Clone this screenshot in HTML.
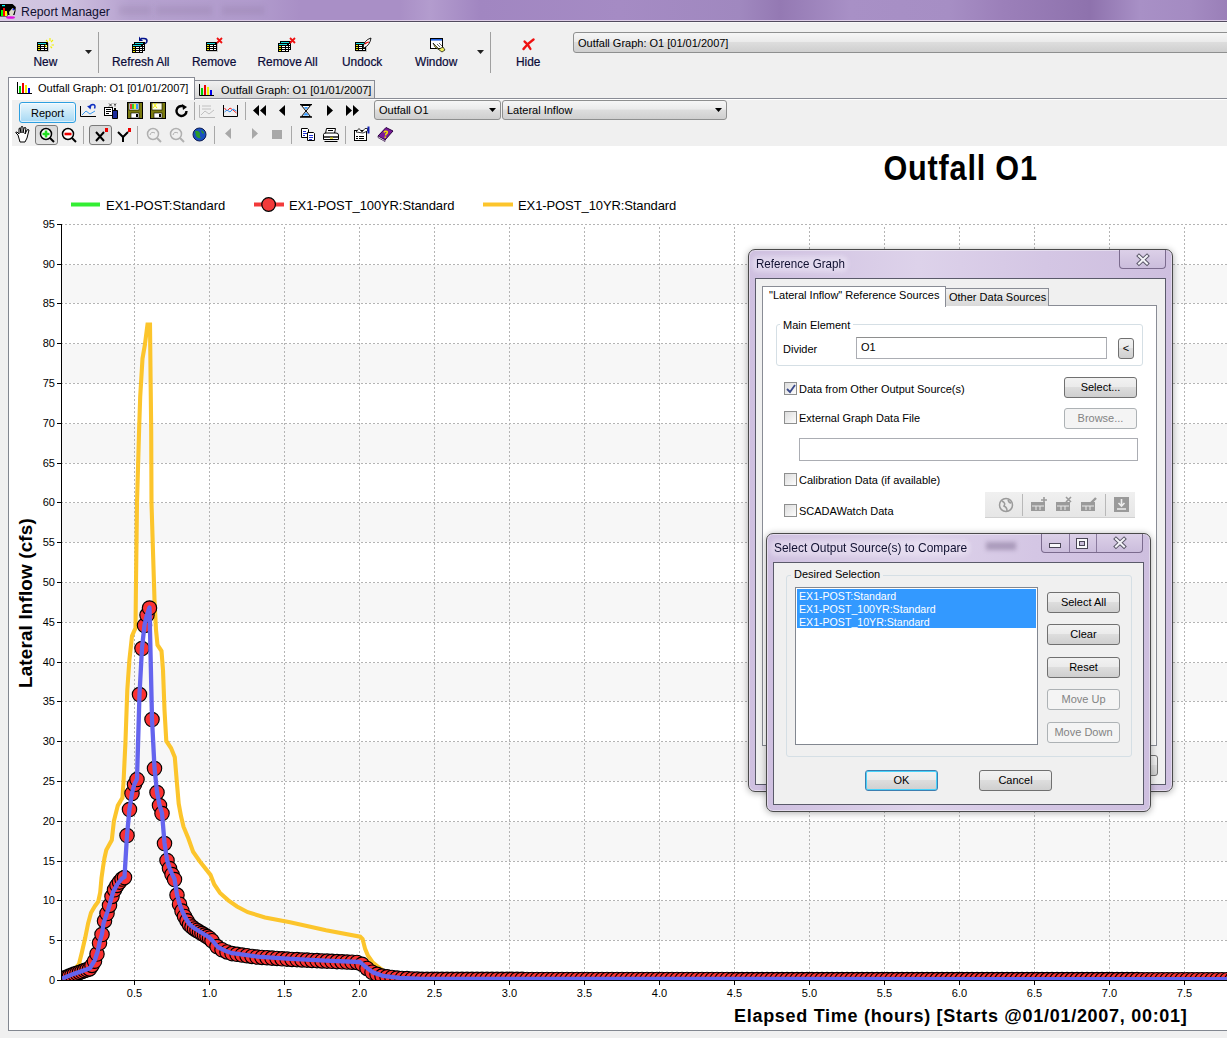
<!DOCTYPE html><html><head><meta charset="utf-8"><style>
*{margin:0;padding:0;box-sizing:border-box}
html,body{width:1227px;height:1038px;overflow:hidden;background:#f0f0f0;font-family:"Liberation Sans",sans-serif;position:relative}
.abs{position:absolute}
#title{left:0;top:0;width:1227px;height:22px;background:linear-gradient(90deg,#d4c8e2 0px,#cfc2df 60px,#c0aed6 105px,#b6a2cf 130px,#b09acc 260px,#a98fc6 300px,#a98fc6 400px,#b39cce 430px,#a186c1 480px,#a58bc4 620px,#a088bf 740px,#9479b3 780px,#a890c6 850px,#a68ec4 950px,#9c80ba 1000px,#8e72ad 1090px,#a890c6 1140px,#a48bc2 1190px,#9a7fb8 1227px);}
#title:after{content:"";position:absolute;left:0;right:0;top:20px;height:1px;background:#dccce6}
#title:before{content:"";position:absolute;left:0;right:0;top:21px;height:1px;background:#524a5e}
.rl{position:absolute;font-size:11.9px;color:#0a0a38;white-space:nowrap;top:54.8px;-webkit-text-stroke:0.2px #0a0a38}
.sep{position:absolute;width:1px;background:#a0a0a0}
.combo{position:absolute;border:1px solid #8e8f8f;border-radius:3px;background:linear-gradient(#f6f6f6 0%,#ebebeb 45%,#dddddd 50%,#cfcfcf 100%);font-size:11px;color:#000;white-space:nowrap;overflow:hidden}
.tab{position:absolute;font-size:11px;white-space:nowrap}
.ico{position:absolute}
.dlgframe{position:absolute;border:1px solid #4a4a4a;border-radius:7px;background:linear-gradient(90deg,#cfc0e0,#ddd2ea 40%,#d4c6e4 70%,#cebfdf);box-shadow:inset 0 0 0 1px rgba(255,255,255,.4),0 1px 7px rgba(0,0,0,.33)}
.dtext{position:absolute;font-size:11px;color:#000;white-space:nowrap}
.btn{position:absolute;border:1px solid #707070;border-radius:3px;background:linear-gradient(#f2f2f2 0%,#ebebeb 45%,#dddddd 50%,#cfcfcf 100%);font-size:11px;text-align:center;color:#000}
.btn.dis{border-color:#adb2b5;background:#f4f4f4;color:#838383}
.chk{position:absolute;width:13px;height:13px;border:1px solid #8e8f8f;background:linear-gradient(135deg,#dcdcdc,#fdfdfd)}
</style></head><body>
<div id="title" class="abs"></div>
<div class="abs" style="left:21px;top:4.5px;font-size:12.3px;color:#101030;white-space:nowrap">Report Manager</div>
<div class="abs" style="left:119px;top:6px;width:32px;height:9px;background:rgba(110,90,130,.14);filter:blur(2.6px)"></div>
<div class="abs" style="left:156px;top:6px;width:56px;height:9px;background:rgba(110,90,130,.14);filter:blur(2.6px)"></div>
<div class="abs" style="left:222px;top:6px;width:42px;height:9px;background:rgba(110,90,130,.14);filter:blur(2.6px)"></div>
<div class="abs" style="left:0;top:22px;width:1227px;height:1px;background:#f8f8f8"></div>
<svg class="abs" style="left:0;top:0" width="17" height="20"><rect x="0" y="4" width="7.5" height="12.5" fill="#000"/><rect x="2" y="5" width="3" height="1.2" fill="#0ff"/><rect x="1" y="10" width="2" height="6" fill="#0f0"/><rect x="3" y="8" width="2" height="8" fill="#f00"/><rect x="5" y="11" width="2" height="5" fill="#ff0"/><path d="M6 4 H12.5 L15.8 7 L15.5 11 L14.5 15 L8 15 L7 12Z" fill="#000"/><path d="M9 12 L12.5 8 L14.8 10 L13.8 13 L12.5 16.5 L10 17Z" fill="#dcdcc8"/><circle cx="13.4" cy="9.4" r=".9" fill="#0010ff"/><ellipse cx="10.5" cy="17.5" rx="4.5" ry="1.3" fill="#e010e0"/></svg>
<div class="rl" style="left:33.5px">New</div>
<div class="rl" style="left:112px">Refresh All</div>
<div class="rl" style="left:192px">Remove</div>
<div class="rl" style="left:257.5px">Remove All</div>
<div class="rl" style="left:342px">Undock</div>
<div class="rl" style="left:415px">Window</div>
<div class="rl" style="left:516px">Hide</div>
<div class="sep" style="left:98px;top:32px;height:41px"></div>
<div class="sep" style="left:490px;top:32px;height:41px"></div>
<svg class="abs" style="left:85px;top:50px" width="8" height="5"><path d="M0 0 L7 0 L3.5 4Z" fill="#222"/></svg>
<svg class="abs" style="left:477px;top:50px" width="8" height="5"><path d="M0 0 L7 0 L3.5 4Z" fill="#222"/></svg>
<svg class="abs" style="left:37px;top:37px" width="19" height="16"><rect x="1" y="6" width="11" height="9" fill="#9a9a9a" opacity=".5"/><rect x="0" y="5" width="11" height="9" fill="#000"/><rect x="1" y="6" width="8" height="1" fill="#1de0e0"/><rect x="1" y="8" width="2" height="1" fill="#f0f000"/><rect x="4" y="8" width="3" height="1" fill="#fff"/><rect x="8" y="8" width="2" height="1" fill="#fff"/><rect x="1" y="10" width="2" height="1" fill="#f0f000"/><rect x="4" y="10" width="3" height="1" fill="#fff"/><rect x="8" y="10" width="2" height="1" fill="#fff"/><rect x="1" y="12" width="2" height="1" fill="#f0f000"/><rect x="4" y="12" width="3" height="1" fill="#fff"/><rect x="8" y="12" width="2" height="1" fill="#fff"/><path d="M8 8 L10 10 M13 1 V4 M16 3 L14 5 M17 8 H14.5 M9 3 L11 5 M15 11 L13.5 9.5" stroke="#f0f000" stroke-width="1.1"/></svg>
<svg class="abs" style="left:132px;top:36px" width="18" height="18"><rect x="2" y="6" width="11" height="9" fill="#000"/><rect x="3" y="7" width="8" height="1" fill="#1de0e0"/><rect x="3" y="9" width="2" height="1" fill="#f0f000"/><rect x="6" y="9" width="3" height="1" fill="#fff"/><rect x="10" y="9" width="2" height="1" fill="#fff"/><rect x="3" y="11" width="2" height="1" fill="#f0f000"/><rect x="6" y="11" width="3" height="1" fill="#fff"/><rect x="10" y="11" width="2" height="1" fill="#fff"/><rect x="3" y="13" width="2" height="1" fill="#f0f000"/><rect x="6" y="13" width="3" height="1" fill="#fff"/><rect x="10" y="13" width="2" height="1" fill="#fff"/><rect x="0" y="8" width="11" height="9" fill="#000"/><rect x="1" y="9" width="8" height="1" fill="#1de0e0"/><rect x="1" y="11" width="2" height="1" fill="#f0f000"/><rect x="4" y="11" width="3" height="1" fill="#fff"/><rect x="8" y="11" width="2" height="1" fill="#fff"/><rect x="1" y="13" width="2" height="1" fill="#f0f000"/><rect x="4" y="13" width="3" height="1" fill="#fff"/><rect x="8" y="13" width="2" height="1" fill="#fff"/><rect x="1" y="15" width="2" height="1" fill="#f0f000"/><rect x="4" y="15" width="3" height="1" fill="#fff"/><rect x="8" y="15" width="2" height="1" fill="#fff"/><path d="M9 2.5 H12 Q15 2.5 15 5 Q15 7 13 7.5" stroke="#00108a" stroke-width="1.5" fill="none"/><path d="M7 0.5 L7 5 L11 5Z" fill="#00108a"/></svg>
<svg class="abs" style="left:206px;top:37px" width="18" height="16"><rect x="1" y="6" width="11" height="9" fill="#9a9a9a" opacity=".5"/><rect x="0" y="5" width="11" height="9" fill="#000"/><rect x="1" y="6" width="8" height="1" fill="#1de0e0"/><rect x="1" y="8" width="2" height="1" fill="#f0f000"/><rect x="4" y="8" width="3" height="1" fill="#fff"/><rect x="8" y="8" width="2" height="1" fill="#fff"/><rect x="1" y="10" width="2" height="1" fill="#f0f000"/><rect x="4" y="10" width="3" height="1" fill="#fff"/><rect x="8" y="10" width="2" height="1" fill="#fff"/><rect x="1" y="12" width="2" height="1" fill="#f0f000"/><rect x="4" y="12" width="3" height="1" fill="#fff"/><rect x="8" y="12" width="2" height="1" fill="#fff"/><path d="M11 1 L16 6 M16 1 L11 6" stroke="#ee1111" stroke-width="1.8"/></svg>
<svg class="abs" style="left:278px;top:37px" width="19" height="18"><rect x="2" y="4" width="11" height="9" fill="#000"/><rect x="3" y="5" width="8" height="1" fill="#1de0e0"/><rect x="3" y="7" width="2" height="1" fill="#f0f000"/><rect x="6" y="7" width="3" height="1" fill="#fff"/><rect x="10" y="7" width="2" height="1" fill="#fff"/><rect x="3" y="9" width="2" height="1" fill="#f0f000"/><rect x="6" y="9" width="3" height="1" fill="#fff"/><rect x="10" y="9" width="2" height="1" fill="#fff"/><rect x="3" y="11" width="2" height="1" fill="#f0f000"/><rect x="6" y="11" width="3" height="1" fill="#fff"/><rect x="10" y="11" width="2" height="1" fill="#fff"/><rect x="0" y="6" width="11" height="9" fill="#000"/><rect x="1" y="7" width="8" height="1" fill="#1de0e0"/><rect x="1" y="9" width="2" height="1" fill="#f0f000"/><rect x="4" y="9" width="3" height="1" fill="#fff"/><rect x="8" y="9" width="2" height="1" fill="#fff"/><rect x="1" y="11" width="2" height="1" fill="#f0f000"/><rect x="4" y="11" width="3" height="1" fill="#fff"/><rect x="8" y="11" width="2" height="1" fill="#fff"/><rect x="1" y="13" width="2" height="1" fill="#f0f000"/><rect x="4" y="13" width="3" height="1" fill="#fff"/><rect x="8" y="13" width="2" height="1" fill="#fff"/><path d="M12 1 L17 6 M17 1 L12 6" stroke="#ee1111" stroke-width="1.8"/></svg>
<svg class="abs" style="left:355px;top:37px" width="18" height="16"><rect x="1" y="6" width="11" height="9" fill="#9a9a9a" opacity=".5"/><rect x="0" y="5" width="11" height="9" fill="#000"/><rect x="1" y="6" width="8" height="1" fill="#1de0e0"/><rect x="1" y="8" width="2" height="1" fill="#f0f000"/><rect x="4" y="8" width="3" height="1" fill="#fff"/><rect x="8" y="8" width="2" height="1" fill="#fff"/><rect x="1" y="10" width="2" height="1" fill="#f0f000"/><rect x="4" y="10" width="3" height="1" fill="#fff"/><rect x="8" y="10" width="2" height="1" fill="#fff"/><rect x="1" y="12" width="2" height="1" fill="#f0f000"/><rect x="4" y="12" width="3" height="1" fill="#fff"/><rect x="8" y="12" width="2" height="1" fill="#fff"/><path d="M8 11 Q9 3 16 1 Q15 8 9 11Z" fill="#fff" stroke="#000" stroke-width="0.9"/><path d="M10 7 Q12 5 14 5" stroke="#e00" stroke-width="1.2" fill="none"/></svg>
<svg class="abs" style="left:430px;top:38px" width="17" height="15"><rect x="0.5" y="0.5" width="12" height="10" fill="#fff" stroke="#000"/><rect x="1" y="1" width="11" height="1.6" fill="#2060e0"/><path d="M3 5 L9 11 L13 9 L15 12 L12 14 L5 9Z" fill="#f0f060" stroke="#000" stroke-width=".7"/><path d="M7 6 L10 9 M9 5 L12 8" stroke="#000" stroke-width=".6"/></svg>
<svg class="abs" style="left:522px;top:38px" width="13" height="13"><path d="M1.5 11 Q5 6 11.5 1.5" stroke="#ee1010" stroke-width="2.4" fill="none" stroke-linecap="round"/><path d="M2.5 3.5 Q6 6 8.5 11" stroke="#ee1010" stroke-width="2.2" fill="none" stroke-linecap="round"/></svg>
<div class="combo" style="left:573px;top:32px;width:670px;height:21px;padding:4px 0 0 4px">Outfall Graph: O1 [01/01/2007]</div>
<div class="abs" style="left:8px;top:98px;width:1219px;height:933px;background:#fff;border-left:1px solid #828790;border-top:1px solid #898c95;border-bottom:1px solid #828790"></div>
<div class="tab" style="left:195px;top:80px;width:180px;height:19px;border:1px solid #898c95;border-left:none;background:linear-gradient(#f0f0f0,#d8d8d8)"></div>
<div class="tab" style="left:8px;top:77px;width:187px;height:23px;border:1px solid #898c95;border-bottom:none;background:#fff"></div>
<svg class="abs" style="left:17px;top:82px" width="16" height="12"><path d="M0.5 0 V11.5 H15" stroke="#000" fill="none"/><rect x="2" y="4" width="2" height="7" fill="#0c0"/><rect x="5" y="1" width="2" height="10" fill="#e00"/><rect x="8" y="3" width="2" height="8" fill="#ee0"/><rect x="11" y="6" width="2" height="5" fill="#00e"/></svg>
<div class="tab" style="left:38px;top:82px;font-size:11px">Outfall Graph: O1 [01/01/2007]</div>
<svg class="abs" style="left:199px;top:84px" width="16" height="12"><path d="M0.5 0 V11.5 H15" stroke="#000" fill="none"/><rect x="2" y="4" width="2" height="7" fill="#0c0"/><rect x="5" y="1" width="2" height="10" fill="#e00"/><rect x="8" y="3" width="2" height="8" fill="#ee0"/><rect x="11" y="6" width="2" height="5" fill="#00e"/></svg>
<div class="tab" style="left:221px;top:84px;font-size:11px">Outfall Graph: O1 [01/01/2007]</div>
<div class="abs" style="left:12px;top:100px;width:1215px;height:46px;background:#f0f0f0"></div>
<div class="abs" style="left:19px;top:102px;width:57px;height:21px;border:1px solid #3c9fd8;border-radius:3px;background:linear-gradient(#eaf6fd,#c8e8f8 50%,#a6d8f4);border-color:#2d9fe0;box-shadow:inset 0 0 0 1px rgba(255,255,255,.6);font-size:11px;text-align:center;padding-top:4px">Report</div>
<div class="combo" style="left:374px;top:100px;width:127px;height:20px;padding:3px 0 0 4px">Outfall O1</div>
<div class="combo" style="left:502px;top:100px;width:225px;height:20px;padding:3px 0 0 4px">Lateral Inflow</div>
<svg class="abs" style="left:489px;top:108px" width="8" height="5"><path d="M0 0 L7 0 L3.5 4Z" fill="#000"/></svg>
<svg class="abs" style="left:715px;top:108px" width="8" height="5"><path d="M0 0 L7 0 L3.5 4Z" fill="#000"/></svg>
<div class="sep" style="left:194px;top:102px;height:18px;background:#a8a8a8"></div>
<div class="sep" style="left:245px;top:102px;height:18px;background:#a8a8a8"></div>
<div class="sep" style="left:83px;top:126px;height:18px;background:#a8a8a8"></div>
<div class="sep" style="left:137px;top:126px;height:18px;background:#a8a8a8"></div>
<div class="sep" style="left:214px;top:126px;height:18px;background:#a8a8a8"></div>
<div class="sep" style="left:291px;top:126px;height:18px;background:#a8a8a8"></div>
<div class="sep" style="left:345px;top:126px;height:18px;background:#a8a8a8"></div>
<svg class="abs" style="left:80px;top:103px" width="17" height="15"><path d="M0.5 3 V13.5 H16" stroke="#000" fill="none"/><path d="M2 12 L6 8 L10 11 L15 8" stroke="#3a9af0" fill="none"/><path d="M9.5 5 Q10 1.5 13 1.5 Q16 2 14.5 5.5" stroke="#1030c0" stroke-width="1.5" fill="none"/><path d="M7 3 L10.5 6.5 L11.5 2.5Z" fill="#1030c0"/></svg>
<svg class="abs" style="left:103px;top:103px" width="16" height="17"><rect x="1.5" y="4.5" width="8" height="8" fill="#fff" stroke="#000"/><path d="M3 6.5 H8 M3 8.5 H8 M3 10.5 H6" stroke="#000"/><path d="M9.5 7.5 H14.5 V15.5 H9.5Z" fill="#1a2a9a" stroke="#000"/><rect x="11" y="5" width="2" height="3" fill="#000"/><path d="M6 0.5 L9 3.5 M9 0.5 L6 3.5" stroke="#333" stroke-width=".9"/><path d="M11 0.5 L12 2 L13 0.5 M12 2 V3.5" stroke="#333" stroke-width=".9" fill="none"/></svg>
<svg class="abs" style="left:127px;top:102px" width="16" height="17"><rect x="0.5" y="0.5" width="15" height="16" fill="#7a7a10" stroke="#000"/><rect x="2" y="1" width="10" height="7" fill="#fff" stroke="#000" stroke-width=".6"/><rect x="3" y="2" width="2" height="5" fill="#e33"/><rect x="5" y="2" width="2" height="5" fill="#3c3"/><rect x="7" y="2" width="2" height="5" fill="#ee3"/><rect x="9" y="2" width="2" height="5" fill="#39f"/><rect x="4" y="11" width="8" height="5" fill="#fff" stroke="#000" stroke-width=".6"/><rect x="9" y="12" width="2" height="3" fill="#000"/></svg>
<svg class="abs" style="left:150px;top:102px" width="16" height="17"><rect x="0.5" y="0.5" width="15" height="16" fill="#7a7a10" stroke="#000"/><rect x="2" y="1" width="10" height="7" fill="#ffffe0" stroke="#000" stroke-width=".6"/><path d="M3 1 L7 6 M7 1 L3 6" stroke="#ee0"/><rect x="4" y="11" width="8" height="5" fill="#fff" stroke="#000" stroke-width=".6"/><rect x="9" y="12" width="2" height="3" fill="#000"/></svg>
<svg class="abs" style="left:175px;top:104px" width="14" height="14"><path d="M11.5 7 A5 5 0 1 1 8 2.2" stroke="#000" stroke-width="2.4" fill="none"/><path d="M7 0 L12 3 L8 6Z" fill="#000"/></svg>
<svg class="abs" style="left:199px;top:103px" width="17" height="15"><path d="M0.5 2 V14.5 H16" stroke="#b8b8b8" fill="none"/><path d="M2 12 L6 8 L10 11 L15 7 M3 6 H12 M3 3 H12" stroke="#c0c0c0" fill="none"/></svg>
<svg class="abs" style="left:223px;top:105px" width="15" height="12"><path d="M0.5 0 V11.5 H14.5 V0" stroke="#000" fill="none"/><path d="M1.5 3 L4 6 L7 3 L10 5 L13.5 8" stroke="#f02020" fill="none"/><path d="M1.5 7 L4 5 L7 7 L10 4 L13.5 6" stroke="#3090f0" fill="none"/></svg>
<svg class="abs" style="left:253px;top:105px" width="14" height="12"><path d="M6 0 L0 5.5 L6 11Z M13 0 L7 5.5 L13 11Z" fill="#000"/></svg>
<svg class="abs" style="left:279px;top:105px" width="7" height="12"><path d="M6 0 L0 5.5 L6 11Z" fill="#000"/></svg>
<svg class="abs" style="left:300px;top:104px" width="13" height="14"><path d="M0 0.5 H12 M0 13 H12" stroke="#000" stroke-width="1.5"/><path d="M1.5 1.5 L10.5 1.5 L6 7 L10.5 12.5 L1.5 12.5 L6 7Z" fill="#fff" stroke="#000"/><path d="M3 11.5 L6 8.5 L9 11.5Z M4 3 H8 L6 5.5Z" fill="#39f"/></svg>
<svg class="abs" style="left:327px;top:105px" width="7" height="12"><path d="M0 0 L6 5.5 L0 11Z" fill="#000"/></svg>
<svg class="abs" style="left:346px;top:105px" width="14" height="12"><path d="M0 0 L6 5.5 L0 11Z M7 0 L13 5.5 L7 11Z" fill="#000"/></svg>
<svg class="abs" style="left:15px;top:126px" width="16" height="17"><path d="M3 9 L1 7 Q0 6 2 6 L4 8 L4 3 Q4 2 5 2 L6 7 L6 1 Q7 0 8 1 L8 7 L9 2 Q10 1 11 2 L10 8 L12 4 Q13 3 14 4 L12 12 L10 16 L5 16Z" fill="#fff" stroke="#000" stroke-width="1"/></svg>
<div class="abs" style="left:35px;top:125px;width:23px;height:20px;border:1px solid #7a7a7a;border-radius:3px;background:linear-gradient(#d8d8d8,#e4e4e4)"></div>
<svg class="abs" style="left:39px;top:127px" width="16" height="16"><circle cx="7" cy="7" r="5.5" fill="#fff" stroke="#000" stroke-width="1.5"/><path d="M11 11 L15 15" stroke="#000" stroke-width="2"/><path d="M7 3.5 V10.5 M3.5 7 H10.5" stroke="#2d2" stroke-width="2.6"/></svg>
<svg class="abs" style="left:61px;top:127px" width="16" height="16"><circle cx="7" cy="7" r="5.5" fill="#fff" stroke="#000" stroke-width="1.5"/><path d="M11 11 L15 15" stroke="#000" stroke-width="2"/><path d="M3.5 7 H10.5" stroke="#e00" stroke-width="2.6"/></svg>
<div class="abs" style="left:89px;top:125px;width:23px;height:20px;border:1px solid #7a7a7a;border-radius:3px;background:linear-gradient(#d8d8d8,#e4e4e4)"></div>
<svg class="abs" style="left:93px;top:127px" width="16" height="16"><path d="M3 5 L11 14 M11 5 L3 14" stroke="#000" stroke-width="2"/><rect x="12" y="1" width="3" height="4" fill="#e00"/></svg>
<svg class="abs" style="left:116px;top:127px" width="16" height="16"><path d="M2 5 L7 10 L12 5 M7 10 V15" stroke="#000" stroke-width="2" fill="none"/><rect x="12" y="1" width="3" height="4" fill="#e00"/></svg>
<svg class="abs" style="left:146px;top:127px" width="16" height="16"><circle cx="7" cy="7" r="5.5" fill="none" stroke="#b0b0b0" stroke-width="1.5"/><path d="M11 11 L15 15" stroke="#b0b0b0" stroke-width="2"/><path d="M4 8 Q5 4 9 6" stroke="#b0b0b0" fill="none"/></svg>
<svg class="abs" style="left:169px;top:127px" width="16" height="16"><circle cx="7" cy="7" r="5.5" fill="none" stroke="#b0b0b0" stroke-width="1.5"/><path d="M11 11 L15 15" stroke="#b0b0b0" stroke-width="2"/><path d="M4 8 Q5 4 9 6" stroke="#b0b0b0" fill="none"/></svg>
<svg class="abs" style="left:192px;top:127px" width="15" height="15"><circle cx="7.5" cy="7.5" r="6.5" fill="#1a50c0" stroke="#0a1a50"/><path d="M3 4 Q6 3 8 6 Q7 9 9 11 Q6 12 4 9Z M9 3 Q12 4 12 7 L10 6Z" fill="#2a9a2a"/></svg>
<svg class="abs" style="left:225px;top:128px" width="7" height="12"><path d="M6 0 L0 5.5 L6 11Z" fill="#a8a8a8"/></svg>
<svg class="abs" style="left:252px;top:128px" width="7" height="12"><path d="M0 0 L6 5.5 L0 11Z" fill="#a8a8a8"/></svg>
<div class="abs" style="left:272px;top:130px;width:10px;height:9px;background:#a8a8a8"></div>
<svg class="abs" style="left:300px;top:127px" width="17" height="15"><path d="M1.5 1.5 H7.5 L8.5 2.5 V10.5 H1.5Z" fill="#fff" stroke="#000"/><path d="M3 4.5 H6 M3 6.5 H7 M3 8.5 H5" stroke="#2030d0"/><path d="M7.5 5.5 H13.5 L14.5 6.5 V13.5 H7.5Z" fill="#fff" stroke="#000"/><path d="M9 8.5 H13 M9 10.5 H13 M9 12.5 H12" stroke="#2030d0"/></svg>
<svg class="abs" style="left:322px;top:127px" width="18" height="16"><path d="M4.5 1.5 H13.5 L12.5 6.5 H3.5Z" fill="#fff" stroke="#000"/><path d="M6 3.5 H11" stroke="#000"/><path d="M1.5 7.5 Q1.5 6 4 6 H14 Q16.5 6 16.5 8 V12.5 H1.5Z" fill="#fff" stroke="#000"/><path d="M1.5 10 H16.5" stroke="#000" stroke-width="1.4"/><rect x="8" y="10.5" width="3" height="1.2" fill="#e8e000"/><path d="M2.5 14.5 H15.5" stroke="#000"/></svg>
<svg class="abs" style="left:353px;top:126px" width="18" height="16"><rect x="1.5" y="4.5" width="12" height="10" fill="#fff" stroke="#000"/><path d="M3 10.5 H5 M6 10.5 H11 M3 12.5 H5 M6 12.5 H11" stroke="#000"/><path d="M3 6 L6 2.5 L9 6 L12 2.5 L14.5 2.5 L14.5 5 L10 7Z" fill="#fff" stroke="#000" stroke-width=".8"/><rect x="14.5" y="0.5" width="2" height="7" fill="#1020b0"/></svg>
<svg class="abs" style="left:377px;top:126px" width="17" height="16"><path d="M1 10 L9 1.5 L16 5 L8 14Z" fill="#7a1a9a" stroke="#2a0040"/><path d="M1 10 L8 14 L8 15.5 L1 11.5Z" fill="#fff" stroke="#2a0040" stroke-width=".7"/><path d="M7 6.5 Q8 4.5 10 5.5 Q11 7 9 8 L8.5 9.5" stroke="#f0e000" stroke-width="1.5" fill="none"/><rect x="7.5" y="10.5" width="1.6" height="1.4" fill="#f0e000"/></svg>
<svg width="1227" height="1038" style="position:absolute;left:0;top:0">
<defs><clipPath id="pc"><rect x="62" y="224" width="1170" height="756.5"/></clipPath></defs>
<rect x="62" y="901.0" width="1170" height="39.0" fill="#f7f7f7"/>
<rect x="62" y="822.0" width="1170" height="39.0" fill="#f7f7f7"/>
<rect x="62" y="742.0" width="1170" height="39.0" fill="#f7f7f7"/>
<rect x="62" y="663.0" width="1170" height="38.0" fill="#f7f7f7"/>
<rect x="62" y="583.0" width="1170" height="39.0" fill="#f7f7f7"/>
<rect x="62" y="503.0" width="1170" height="39.0" fill="#f7f7f7"/>
<rect x="62" y="424.0" width="1170" height="39.0" fill="#f7f7f7"/>
<rect x="62" y="344.0" width="1170" height="39.0" fill="#f7f7f7"/>
<rect x="62" y="265.0" width="1170" height="38.0" fill="#f7f7f7"/>
<line x1="61" y1="940.5" x2="1227" y2="940.5" stroke="#b4b4b4" stroke-width="1" stroke-dasharray="2,2"/>
<line x1="61" y1="900.5" x2="1227" y2="900.5" stroke="#b4b4b4" stroke-width="1" stroke-dasharray="2,2"/>
<line x1="61" y1="861.5" x2="1227" y2="861.5" stroke="#b4b4b4" stroke-width="1" stroke-dasharray="2,2"/>
<line x1="61" y1="821.5" x2="1227" y2="821.5" stroke="#b4b4b4" stroke-width="1" stroke-dasharray="2,2"/>
<line x1="61" y1="781.5" x2="1227" y2="781.5" stroke="#b4b4b4" stroke-width="1" stroke-dasharray="2,2"/>
<line x1="61" y1="741.5" x2="1227" y2="741.5" stroke="#b4b4b4" stroke-width="1" stroke-dasharray="2,2"/>
<line x1="61" y1="701.5" x2="1227" y2="701.5" stroke="#b4b4b4" stroke-width="1" stroke-dasharray="2,2"/>
<line x1="61" y1="662.5" x2="1227" y2="662.5" stroke="#b4b4b4" stroke-width="1" stroke-dasharray="2,2"/>
<line x1="61" y1="622.5" x2="1227" y2="622.5" stroke="#b4b4b4" stroke-width="1" stroke-dasharray="2,2"/>
<line x1="61" y1="582.5" x2="1227" y2="582.5" stroke="#b4b4b4" stroke-width="1" stroke-dasharray="2,2"/>
<line x1="61" y1="542.5" x2="1227" y2="542.5" stroke="#b4b4b4" stroke-width="1" stroke-dasharray="2,2"/>
<line x1="61" y1="502.5" x2="1227" y2="502.5" stroke="#b4b4b4" stroke-width="1" stroke-dasharray="2,2"/>
<line x1="61" y1="463.5" x2="1227" y2="463.5" stroke="#b4b4b4" stroke-width="1" stroke-dasharray="2,2"/>
<line x1="61" y1="423.5" x2="1227" y2="423.5" stroke="#b4b4b4" stroke-width="1" stroke-dasharray="2,2"/>
<line x1="61" y1="383.5" x2="1227" y2="383.5" stroke="#b4b4b4" stroke-width="1" stroke-dasharray="2,2"/>
<line x1="61" y1="343.5" x2="1227" y2="343.5" stroke="#b4b4b4" stroke-width="1" stroke-dasharray="2,2"/>
<line x1="61" y1="303.5" x2="1227" y2="303.5" stroke="#b4b4b4" stroke-width="1" stroke-dasharray="2,2"/>
<line x1="61" y1="264.5" x2="1227" y2="264.5" stroke="#b4b4b4" stroke-width="1" stroke-dasharray="2,2"/>
<line x1="61" y1="224.5" x2="1227" y2="224.5" stroke="#b4b4b4" stroke-width="1" stroke-dasharray="2,2"/>
<line x1="134.5" y1="227" x2="134.5" y2="980" stroke="#b4b4b4" stroke-width="1" stroke-dasharray="2,2"/>
<line x1="209.5" y1="227" x2="209.5" y2="980" stroke="#b4b4b4" stroke-width="1" stroke-dasharray="2,2"/>
<line x1="284.5" y1="227" x2="284.5" y2="980" stroke="#b4b4b4" stroke-width="1" stroke-dasharray="2,2"/>
<line x1="359.5" y1="227" x2="359.5" y2="980" stroke="#b4b4b4" stroke-width="1" stroke-dasharray="2,2"/>
<line x1="434.5" y1="227" x2="434.5" y2="980" stroke="#b4b4b4" stroke-width="1" stroke-dasharray="2,2"/>
<line x1="509.5" y1="227" x2="509.5" y2="980" stroke="#b4b4b4" stroke-width="1" stroke-dasharray="2,2"/>
<line x1="584.5" y1="227" x2="584.5" y2="980" stroke="#b4b4b4" stroke-width="1" stroke-dasharray="2,2"/>
<line x1="659.5" y1="227" x2="659.5" y2="980" stroke="#b4b4b4" stroke-width="1" stroke-dasharray="2,2"/>
<line x1="734.5" y1="227" x2="734.5" y2="980" stroke="#b4b4b4" stroke-width="1" stroke-dasharray="2,2"/>
<line x1="809.5" y1="227" x2="809.5" y2="980" stroke="#b4b4b4" stroke-width="1" stroke-dasharray="2,2"/>
<line x1="884.5" y1="227" x2="884.5" y2="980" stroke="#b4b4b4" stroke-width="1" stroke-dasharray="2,2"/>
<line x1="959.5" y1="227" x2="959.5" y2="980" stroke="#b4b4b4" stroke-width="1" stroke-dasharray="2,2"/>
<line x1="1034.5" y1="227" x2="1034.5" y2="980" stroke="#b4b4b4" stroke-width="1" stroke-dasharray="2,2"/>
<line x1="1109.5" y1="227" x2="1109.5" y2="980" stroke="#b4b4b4" stroke-width="1" stroke-dasharray="2,2"/>
<line x1="1184.5" y1="227" x2="1184.5" y2="980" stroke="#b4b4b4" stroke-width="1" stroke-dasharray="2,2"/>
<g clip-path="url(#pc)">
<path d="M62.0,977.5 L72.0,972.0 L79.0,964.0 L81.9,952.3 L85.2,937.8 L88.1,923.4 L91.0,912.8 L95.0,906.0 L98.2,901.7 L100.2,892.5 L101.5,878.0 L103.2,866.0 L104.5,858.0 L106.3,850.0 L111.8,840.0 L113.9,821.0 L117.8,805.6 L122.4,797.9 L123.6,781.0 L125.5,741.0 L127.3,690.0 L129.4,660.0 L132.0,636.0 L135.5,628.0 L136.0,582.0 L137.0,503.0 L139.1,430.0 L140.2,396.7 L142.5,358.6 L144.9,344.7 L147.5,324.5 L150.0,324.5 L150.6,379.4 L151.2,430.0 L151.5,503.0 L154.5,600.0 L156.0,630.0 L157.5,645.0 L161.5,651.0 L163.0,670.0 L164.5,710.0 L166.3,741.0 L171.0,748.0 L174.8,757.3 L176.7,780.5 L178.7,803.6 L181.0,816.0 L183.5,826.7 L188.3,838.3 L193.1,851.8 L199.9,861.4 L210.5,874.9 L214.3,884.5 L220.0,893.0 L228.3,900.4 L237.0,906.5 L247.8,912.2 L265.0,917.5 L290.0,922.3 L326.0,930.2 L360.2,936.7 L362.6,939.1 L365.1,948.9 L368.0,955.7 L372.9,962.6 L377.8,966.5 L385.0,972.0 L400.0,976.5 L420.0,978.3 L1240.0,979.0" fill="none" stroke="#fcc52c" stroke-width="4.1" stroke-linejoin="miter" stroke-miterlimit="1.5"/>
<g fill="#fa3232" stroke="#000" stroke-width="1.15"><circle cx="62.0" cy="979.0" r="7.2"/><circle cx="64.5" cy="978.0" r="7.2"/><circle cx="67.0" cy="977.1" r="7.2"/><circle cx="69.5" cy="976.1" r="7.2"/><circle cx="72.0" cy="975.1" r="7.2"/><circle cx="74.5" cy="974.1" r="7.2"/><circle cx="77.0" cy="973.3" r="7.2"/><circle cx="79.5" cy="972.4" r="7.2"/><circle cx="82.0" cy="971.5" r="7.2"/><circle cx="84.5" cy="970.6" r="7.2"/><circle cx="87.0" cy="969.8" r="7.2"/><circle cx="89.5" cy="968.9" r="7.2"/><circle cx="92.0" cy="965.4" r="7.2"/><circle cx="94.5" cy="961.2" r="7.2"/><circle cx="97.0" cy="954.0" r="7.2"/><circle cx="99.5" cy="943.1" r="7.2"/><circle cx="102.0" cy="934.5" r="7.2"/><circle cx="104.5" cy="920.9" r="7.2"/><circle cx="107.0" cy="913.5" r="7.2"/><circle cx="109.5" cy="905.4" r="7.2"/><circle cx="112.0" cy="896.4" r="7.2"/><circle cx="114.5" cy="889.8" r="7.2"/><circle cx="117.0" cy="885.4" r="7.2"/><circle cx="119.5" cy="882.1" r="7.2"/><circle cx="122.0" cy="879.0" r="7.2"/><circle cx="124.5" cy="877.5" r="7.2"/><circle cx="127.0" cy="835.5" r="7.2"/><circle cx="129.5" cy="809.5" r="7.2"/><circle cx="132.0" cy="793.5" r="7.2"/><circle cx="134.5" cy="784.5" r="7.2"/><circle cx="137.0" cy="779.5" r="7.2"/><circle cx="139.5" cy="694.5" r="7.2"/><circle cx="142.0" cy="648.5" r="7.2"/><circle cx="144.5" cy="625.5" r="7.2"/><circle cx="147.0" cy="615.1" r="7.2"/><circle cx="149.5" cy="608.0" r="7.2"/><circle cx="152.0" cy="719.5" r="7.2"/><circle cx="154.5" cy="768.5" r="7.2"/><circle cx="157.0" cy="792.5" r="7.2"/><circle cx="159.5" cy="805.5" r="7.2"/><circle cx="162.0" cy="813.5" r="7.2"/><circle cx="164.5" cy="843.5" r="7.2"/><circle cx="167.0" cy="860.5" r="7.2"/><circle cx="169.5" cy="868.5" r="7.2"/><circle cx="172.0" cy="874.5" r="7.2"/><circle cx="174.5" cy="879.5" r="7.2"/><circle cx="177.0" cy="895.1" r="7.2"/><circle cx="179.5" cy="904.2" r="7.2"/><circle cx="182.0" cy="911.0" r="7.2"/><circle cx="184.5" cy="916.4" r="7.2"/><circle cx="187.0" cy="920.8" r="7.2"/><circle cx="189.5" cy="924.7" r="7.2"/><circle cx="192.0" cy="926.9" r="7.2"/><circle cx="194.5" cy="928.9" r="7.2"/><circle cx="197.0" cy="930.4" r="7.2"/><circle cx="199.5" cy="932.0" r="7.2"/><circle cx="202.0" cy="933.5" r="7.2"/><circle cx="204.5" cy="935.1" r="7.2"/><circle cx="207.0" cy="936.6" r="7.2"/><circle cx="209.5" cy="938.2" r="7.2"/><circle cx="212.0" cy="940.7" r="7.2"/><circle cx="217.0" cy="946.6" r="7.2"/><circle cx="222.0" cy="949.7" r="7.2"/><circle cx="227.0" cy="951.9" r="7.2"/><circle cx="232.0" cy="953.6" r="7.2"/><circle cx="237.0" cy="954.3" r="7.2"/><circle cx="242.0" cy="955.0" r="7.2"/><circle cx="247.0" cy="955.7" r="7.2"/><circle cx="252.0" cy="956.4" r="7.2"/><circle cx="257.0" cy="957.0" r="7.2"/><circle cx="262.0" cy="957.4" r="7.2"/><circle cx="267.0" cy="957.7" r="7.2"/><circle cx="272.0" cy="958.1" r="7.2"/><circle cx="277.0" cy="958.4" r="7.2"/><circle cx="282.0" cy="958.8" r="7.2"/><circle cx="287.0" cy="959.1" r="7.2"/><circle cx="292.0" cy="959.4" r="7.2"/><circle cx="297.0" cy="959.6" r="7.2"/><circle cx="302.0" cy="959.9" r="7.2"/><circle cx="307.0" cy="960.1" r="7.2"/><circle cx="312.0" cy="960.4" r="7.2"/><circle cx="317.0" cy="960.6" r="7.2"/><circle cx="322.0" cy="960.9" r="7.2"/><circle cx="327.0" cy="961.1" r="7.2"/><circle cx="332.0" cy="961.3" r="7.2"/><circle cx="337.0" cy="961.6" r="7.2"/><circle cx="342.0" cy="961.8" r="7.2"/><circle cx="347.0" cy="962.0" r="7.2"/><circle cx="352.0" cy="962.2" r="7.2"/><circle cx="357.0" cy="962.4" r="7.2"/><circle cx="362.0" cy="964.3" r="7.2"/><circle cx="367.0" cy="968.4" r="7.2"/><circle cx="372.0" cy="972.2" r="7.2"/><circle cx="377.0" cy="974.3" r="7.2"/><circle cx="382.0" cy="976.1" r="7.2"/><circle cx="387.0" cy="976.8" r="7.2"/><circle cx="392.0" cy="977.4" r="7.2"/><circle cx="397.0" cy="978.0" r="7.2"/><circle cx="402.0" cy="978.4" r="7.2"/><circle cx="407.0" cy="978.6" r="7.2"/><circle cx="412.0" cy="978.9" r="7.2"/><circle cx="417.0" cy="979.1" r="7.2"/><circle cx="422.0" cy="979.3" r="7.2"/><circle cx="427.0" cy="979.3" r="7.2"/><circle cx="432.0" cy="979.3" r="7.2"/><circle cx="437.0" cy="979.3" r="7.2"/><circle cx="442.0" cy="979.3" r="7.2"/><circle cx="447.0" cy="979.3" r="7.2"/><circle cx="452.0" cy="979.3" r="7.2"/><circle cx="457.0" cy="979.3" r="7.2"/><circle cx="462.0" cy="979.3" r="7.2"/><circle cx="467.0" cy="979.3" r="7.2"/><circle cx="472.0" cy="979.3" r="7.2"/><circle cx="477.0" cy="979.3" r="7.2"/><circle cx="482.0" cy="979.3" r="7.2"/><circle cx="487.0" cy="979.3" r="7.2"/><circle cx="492.0" cy="979.3" r="7.2"/><circle cx="497.0" cy="979.3" r="7.2"/><circle cx="502.0" cy="979.3" r="7.2"/><circle cx="507.0" cy="979.3" r="7.2"/><circle cx="512.0" cy="979.3" r="7.2"/><circle cx="517.0" cy="979.3" r="7.2"/><circle cx="522.0" cy="979.3" r="7.2"/><circle cx="527.0" cy="979.4" r="7.2"/><circle cx="532.0" cy="979.4" r="7.2"/><circle cx="537.0" cy="979.4" r="7.2"/><circle cx="542.0" cy="979.4" r="7.2"/><circle cx="547.0" cy="979.4" r="7.2"/><circle cx="552.0" cy="979.4" r="7.2"/><circle cx="557.0" cy="979.4" r="7.2"/><circle cx="562.0" cy="979.4" r="7.2"/><circle cx="567.0" cy="979.4" r="7.2"/><circle cx="572.0" cy="979.4" r="7.2"/><circle cx="577.0" cy="979.4" r="7.2"/><circle cx="582.0" cy="979.4" r="7.2"/><circle cx="587.0" cy="979.4" r="7.2"/><circle cx="592.0" cy="979.4" r="7.2"/><circle cx="597.0" cy="979.4" r="7.2"/><circle cx="602.0" cy="979.4" r="7.2"/><circle cx="607.0" cy="979.4" r="7.2"/><circle cx="612.0" cy="979.4" r="7.2"/><circle cx="617.0" cy="979.4" r="7.2"/><circle cx="622.0" cy="979.4" r="7.2"/><circle cx="627.0" cy="979.4" r="7.2"/><circle cx="632.0" cy="979.4" r="7.2"/><circle cx="637.0" cy="979.4" r="7.2"/><circle cx="642.0" cy="979.4" r="7.2"/><circle cx="647.0" cy="979.4" r="7.2"/><circle cx="652.0" cy="979.4" r="7.2"/><circle cx="657.0" cy="979.4" r="7.2"/><circle cx="662.0" cy="979.4" r="7.2"/><circle cx="667.0" cy="979.4" r="7.2"/><circle cx="672.0" cy="979.4" r="7.2"/><circle cx="677.0" cy="979.4" r="7.2"/><circle cx="682.0" cy="979.4" r="7.2"/><circle cx="687.0" cy="979.4" r="7.2"/><circle cx="692.0" cy="979.4" r="7.2"/><circle cx="697.0" cy="979.4" r="7.2"/><circle cx="702.0" cy="979.4" r="7.2"/><circle cx="707.0" cy="979.4" r="7.2"/><circle cx="712.0" cy="979.4" r="7.2"/><circle cx="717.0" cy="979.4" r="7.2"/><circle cx="722.0" cy="979.4" r="7.2"/><circle cx="727.0" cy="979.4" r="7.2"/><circle cx="732.0" cy="979.5" r="7.2"/><circle cx="737.0" cy="979.5" r="7.2"/><circle cx="742.0" cy="979.5" r="7.2"/><circle cx="747.0" cy="979.5" r="7.2"/><circle cx="752.0" cy="979.5" r="7.2"/><circle cx="757.0" cy="979.5" r="7.2"/><circle cx="762.0" cy="979.5" r="7.2"/><circle cx="767.0" cy="979.5" r="7.2"/><circle cx="772.0" cy="979.5" r="7.2"/><circle cx="777.0" cy="979.5" r="7.2"/><circle cx="782.0" cy="979.5" r="7.2"/><circle cx="787.0" cy="979.5" r="7.2"/><circle cx="792.0" cy="979.5" r="7.2"/><circle cx="797.0" cy="979.5" r="7.2"/><circle cx="802.0" cy="979.5" r="7.2"/><circle cx="807.0" cy="979.5" r="7.2"/><circle cx="812.0" cy="979.5" r="7.2"/><circle cx="817.0" cy="979.5" r="7.2"/><circle cx="822.0" cy="979.5" r="7.2"/><circle cx="827.0" cy="979.5" r="7.2"/><circle cx="832.0" cy="979.5" r="7.2"/><circle cx="837.0" cy="979.5" r="7.2"/><circle cx="842.0" cy="979.5" r="7.2"/><circle cx="847.0" cy="979.5" r="7.2"/><circle cx="852.0" cy="979.5" r="7.2"/><circle cx="857.0" cy="979.5" r="7.2"/><circle cx="862.0" cy="979.5" r="7.2"/><circle cx="867.0" cy="979.5" r="7.2"/><circle cx="872.0" cy="979.5" r="7.2"/><circle cx="877.0" cy="979.5" r="7.2"/><circle cx="882.0" cy="979.5" r="7.2"/><circle cx="887.0" cy="979.5" r="7.2"/><circle cx="892.0" cy="979.5" r="7.2"/><circle cx="897.0" cy="979.5" r="7.2"/><circle cx="902.0" cy="979.5" r="7.2"/><circle cx="907.0" cy="979.5" r="7.2"/><circle cx="912.0" cy="979.5" r="7.2"/><circle cx="917.0" cy="979.5" r="7.2"/><circle cx="922.0" cy="979.5" r="7.2"/><circle cx="927.0" cy="979.5" r="7.2"/><circle cx="932.0" cy="979.5" r="7.2"/><circle cx="937.0" cy="979.6" r="7.2"/><circle cx="942.0" cy="979.6" r="7.2"/><circle cx="947.0" cy="979.6" r="7.2"/><circle cx="952.0" cy="979.6" r="7.2"/><circle cx="957.0" cy="979.6" r="7.2"/><circle cx="962.0" cy="979.6" r="7.2"/><circle cx="967.0" cy="979.6" r="7.2"/><circle cx="972.0" cy="979.6" r="7.2"/><circle cx="977.0" cy="979.6" r="7.2"/><circle cx="982.0" cy="979.6" r="7.2"/><circle cx="987.0" cy="979.6" r="7.2"/><circle cx="992.0" cy="979.6" r="7.2"/><circle cx="997.0" cy="979.6" r="7.2"/><circle cx="1002.0" cy="979.6" r="7.2"/><circle cx="1007.0" cy="979.6" r="7.2"/><circle cx="1012.0" cy="979.6" r="7.2"/><circle cx="1017.0" cy="979.6" r="7.2"/><circle cx="1022.0" cy="979.6" r="7.2"/><circle cx="1027.0" cy="979.6" r="7.2"/><circle cx="1032.0" cy="979.6" r="7.2"/><circle cx="1037.0" cy="979.6" r="7.2"/><circle cx="1042.0" cy="979.6" r="7.2"/><circle cx="1047.0" cy="979.6" r="7.2"/><circle cx="1052.0" cy="979.6" r="7.2"/><circle cx="1057.0" cy="979.6" r="7.2"/><circle cx="1062.0" cy="979.6" r="7.2"/><circle cx="1067.0" cy="979.6" r="7.2"/><circle cx="1072.0" cy="979.6" r="7.2"/><circle cx="1077.0" cy="979.6" r="7.2"/><circle cx="1082.0" cy="979.6" r="7.2"/><circle cx="1087.0" cy="979.6" r="7.2"/><circle cx="1092.0" cy="979.6" r="7.2"/><circle cx="1097.0" cy="979.6" r="7.2"/><circle cx="1102.0" cy="979.6" r="7.2"/><circle cx="1107.0" cy="979.6" r="7.2"/><circle cx="1112.0" cy="979.6" r="7.2"/><circle cx="1117.0" cy="979.6" r="7.2"/><circle cx="1122.0" cy="979.6" r="7.2"/><circle cx="1127.0" cy="979.6" r="7.2"/><circle cx="1132.0" cy="979.6" r="7.2"/><circle cx="1137.0" cy="979.6" r="7.2"/><circle cx="1142.0" cy="979.7" r="7.2"/><circle cx="1147.0" cy="979.7" r="7.2"/><circle cx="1152.0" cy="979.7" r="7.2"/><circle cx="1157.0" cy="979.7" r="7.2"/><circle cx="1162.0" cy="979.7" r="7.2"/><circle cx="1167.0" cy="979.7" r="7.2"/><circle cx="1172.0" cy="979.7" r="7.2"/><circle cx="1177.0" cy="979.7" r="7.2"/><circle cx="1182.0" cy="979.7" r="7.2"/><circle cx="1187.0" cy="979.7" r="7.2"/><circle cx="1192.0" cy="979.7" r="7.2"/><circle cx="1197.0" cy="979.7" r="7.2"/><circle cx="1202.0" cy="979.7" r="7.2"/><circle cx="1207.0" cy="979.7" r="7.2"/><circle cx="1212.0" cy="979.7" r="7.2"/><circle cx="1217.0" cy="979.7" r="7.2"/><circle cx="1222.0" cy="979.7" r="7.2"/><circle cx="1227.0" cy="979.7" r="7.2"/><circle cx="1232.0" cy="979.7" r="7.2"/><circle cx="1237.0" cy="979.7" r="7.2"/></g>
<path d="M62.0,978.5 L74.6,973.6 L90.0,968.2 L94.9,960.0 L97.5,952.0 L99.7,941.7 L102.0,934.0 L103.5,923.4 L108.4,908.9 L113.2,891.6 L117.5,884.0 L122.0,878.5 L124.5,877.0 L127.0,835.0 L129.5,809.0 L132.0,793.0 L134.5,784.0 L137.0,779.0 L139.5,694.0 L142.0,648.0 L144.5,625.0 L147.0,614.6 L149.5,607.5 L152.0,719.0 L154.5,768.0 L157.0,792.0 L159.5,805.0 L162.0,813.0 L164.5,843.0 L167.0,860.0 L169.5,868.0 L172.0,874.0 L174.5,879.0 L177.0,894.6 L179.5,903.7 L181.6,909.6 L185.0,917.0 L189.3,924.0 L193.6,927.8 L203.2,933.8 L209.2,937.4 L212.8,941.0 L217.7,947.0 L225.0,950.7 L232.2,953.2 L257.6,956.6 L286.9,958.6 L326.0,960.6 L360.0,962.0 L365.1,966.5 L372.9,972.4 L382.7,975.8 L400.0,977.8 L421.5,978.8 L1240.0,979.2" fill="none" stroke="#6464ee" stroke-width="4.3" stroke-linejoin="round"/>
</g>
<line x1="61.5" y1="224" x2="61.5" y2="981" stroke="#000" stroke-width="1"/>
<line x1="61" y1="980.5" x2="1227" y2="980.5" stroke="#000" stroke-width="1"/>
<line x1="57" y1="980.5" x2="62" y2="980.5" stroke="#000" stroke-width="1"/>
<text x="55" y="983.7" text-anchor="end" font-family="Liberation Sans" font-size="11" fill="#000">0</text>
<line x1="57" y1="940.5" x2="62" y2="940.5" stroke="#000" stroke-width="1"/>
<text x="55" y="943.7" text-anchor="end" font-family="Liberation Sans" font-size="11" fill="#000">5</text>
<line x1="57" y1="900.5" x2="62" y2="900.5" stroke="#000" stroke-width="1"/>
<text x="55" y="903.7" text-anchor="end" font-family="Liberation Sans" font-size="11" fill="#000">10</text>
<line x1="57" y1="861.5" x2="62" y2="861.5" stroke="#000" stroke-width="1"/>
<text x="55" y="864.7" text-anchor="end" font-family="Liberation Sans" font-size="11" fill="#000">15</text>
<line x1="57" y1="821.5" x2="62" y2="821.5" stroke="#000" stroke-width="1"/>
<text x="55" y="824.7" text-anchor="end" font-family="Liberation Sans" font-size="11" fill="#000">20</text>
<line x1="57" y1="781.5" x2="62" y2="781.5" stroke="#000" stroke-width="1"/>
<text x="55" y="784.7" text-anchor="end" font-family="Liberation Sans" font-size="11" fill="#000">25</text>
<line x1="57" y1="741.5" x2="62" y2="741.5" stroke="#000" stroke-width="1"/>
<text x="55" y="744.7" text-anchor="end" font-family="Liberation Sans" font-size="11" fill="#000">30</text>
<line x1="57" y1="701.5" x2="62" y2="701.5" stroke="#000" stroke-width="1"/>
<text x="55" y="704.7" text-anchor="end" font-family="Liberation Sans" font-size="11" fill="#000">35</text>
<line x1="57" y1="662.5" x2="62" y2="662.5" stroke="#000" stroke-width="1"/>
<text x="55" y="665.7" text-anchor="end" font-family="Liberation Sans" font-size="11" fill="#000">40</text>
<line x1="57" y1="622.5" x2="62" y2="622.5" stroke="#000" stroke-width="1"/>
<text x="55" y="625.7" text-anchor="end" font-family="Liberation Sans" font-size="11" fill="#000">45</text>
<line x1="57" y1="582.5" x2="62" y2="582.5" stroke="#000" stroke-width="1"/>
<text x="55" y="585.7" text-anchor="end" font-family="Liberation Sans" font-size="11" fill="#000">50</text>
<line x1="57" y1="542.5" x2="62" y2="542.5" stroke="#000" stroke-width="1"/>
<text x="55" y="545.7" text-anchor="end" font-family="Liberation Sans" font-size="11" fill="#000">55</text>
<line x1="57" y1="502.5" x2="62" y2="502.5" stroke="#000" stroke-width="1"/>
<text x="55" y="505.7" text-anchor="end" font-family="Liberation Sans" font-size="11" fill="#000">60</text>
<line x1="57" y1="463.5" x2="62" y2="463.5" stroke="#000" stroke-width="1"/>
<text x="55" y="466.7" text-anchor="end" font-family="Liberation Sans" font-size="11" fill="#000">65</text>
<line x1="57" y1="423.5" x2="62" y2="423.5" stroke="#000" stroke-width="1"/>
<text x="55" y="426.7" text-anchor="end" font-family="Liberation Sans" font-size="11" fill="#000">70</text>
<line x1="57" y1="383.5" x2="62" y2="383.5" stroke="#000" stroke-width="1"/>
<text x="55" y="386.7" text-anchor="end" font-family="Liberation Sans" font-size="11" fill="#000">75</text>
<line x1="57" y1="343.5" x2="62" y2="343.5" stroke="#000" stroke-width="1"/>
<text x="55" y="346.7" text-anchor="end" font-family="Liberation Sans" font-size="11" fill="#000">80</text>
<line x1="57" y1="303.5" x2="62" y2="303.5" stroke="#000" stroke-width="1"/>
<text x="55" y="306.7" text-anchor="end" font-family="Liberation Sans" font-size="11" fill="#000">85</text>
<line x1="57" y1="264.5" x2="62" y2="264.5" stroke="#000" stroke-width="1"/>
<text x="55" y="267.7" text-anchor="end" font-family="Liberation Sans" font-size="11" fill="#000">90</text>
<line x1="57" y1="224.5" x2="62" y2="224.5" stroke="#000" stroke-width="1"/>
<text x="55" y="227.7" text-anchor="end" font-family="Liberation Sans" font-size="11" fill="#000">95</text>
<line x1="134.5" y1="980" x2="134.5" y2="985" stroke="#000" stroke-width="1"/>
<text x="134.5" y="997" text-anchor="middle" font-family="Liberation Sans" font-size="11" fill="#000">0.5</text>
<line x1="209.5" y1="980" x2="209.5" y2="985" stroke="#000" stroke-width="1"/>
<text x="209.5" y="997" text-anchor="middle" font-family="Liberation Sans" font-size="11" fill="#000">1.0</text>
<line x1="284.5" y1="980" x2="284.5" y2="985" stroke="#000" stroke-width="1"/>
<text x="284.5" y="997" text-anchor="middle" font-family="Liberation Sans" font-size="11" fill="#000">1.5</text>
<line x1="359.5" y1="980" x2="359.5" y2="985" stroke="#000" stroke-width="1"/>
<text x="359.5" y="997" text-anchor="middle" font-family="Liberation Sans" font-size="11" fill="#000">2.0</text>
<line x1="434.5" y1="980" x2="434.5" y2="985" stroke="#000" stroke-width="1"/>
<text x="434.5" y="997" text-anchor="middle" font-family="Liberation Sans" font-size="11" fill="#000">2.5</text>
<line x1="509.5" y1="980" x2="509.5" y2="985" stroke="#000" stroke-width="1"/>
<text x="509.5" y="997" text-anchor="middle" font-family="Liberation Sans" font-size="11" fill="#000">3.0</text>
<line x1="584.5" y1="980" x2="584.5" y2="985" stroke="#000" stroke-width="1"/>
<text x="584.5" y="997" text-anchor="middle" font-family="Liberation Sans" font-size="11" fill="#000">3.5</text>
<line x1="659.5" y1="980" x2="659.5" y2="985" stroke="#000" stroke-width="1"/>
<text x="659.5" y="997" text-anchor="middle" font-family="Liberation Sans" font-size="11" fill="#000">4.0</text>
<line x1="734.5" y1="980" x2="734.5" y2="985" stroke="#000" stroke-width="1"/>
<text x="734.5" y="997" text-anchor="middle" font-family="Liberation Sans" font-size="11" fill="#000">4.5</text>
<line x1="809.5" y1="980" x2="809.5" y2="985" stroke="#000" stroke-width="1"/>
<text x="809.5" y="997" text-anchor="middle" font-family="Liberation Sans" font-size="11" fill="#000">5.0</text>
<line x1="884.5" y1="980" x2="884.5" y2="985" stroke="#000" stroke-width="1"/>
<text x="884.5" y="997" text-anchor="middle" font-family="Liberation Sans" font-size="11" fill="#000">5.5</text>
<line x1="959.5" y1="980" x2="959.5" y2="985" stroke="#000" stroke-width="1"/>
<text x="959.5" y="997" text-anchor="middle" font-family="Liberation Sans" font-size="11" fill="#000">6.0</text>
<line x1="1034.5" y1="980" x2="1034.5" y2="985" stroke="#000" stroke-width="1"/>
<text x="1034.5" y="997" text-anchor="middle" font-family="Liberation Sans" font-size="11" fill="#000">6.5</text>
<line x1="1109.5" y1="980" x2="1109.5" y2="985" stroke="#000" stroke-width="1"/>
<text x="1109.5" y="997" text-anchor="middle" font-family="Liberation Sans" font-size="11" fill="#000">7.0</text>
<line x1="1184.5" y1="980" x2="1184.5" y2="985" stroke="#000" stroke-width="1"/>
<text x="1184.5" y="997" text-anchor="middle" font-family="Liberation Sans" font-size="11" fill="#000">7.5</text>
<line x1="71" y1="204.5" x2="100" y2="204.5" stroke="#33ee33" stroke-width="4"/>
<text x="106" y="210" font-family="Liberation Sans" font-size="13" fill="#000">EX1-POST:Standard</text>
<line x1="254" y1="204.5" x2="284" y2="204.5" stroke="#f23a3a" stroke-width="4"/>
<circle cx="268.6" cy="204.5" r="6.8" fill="#f23a3a" stroke="#000" stroke-width="1.2"/>
<text x="289" y="210" font-family="Liberation Sans" font-size="13" letter-spacing="-0.1" fill="#000">EX1-POST_100YR:Standard</text>
<line x1="483" y1="204.5" x2="513" y2="204.5" stroke="#fcc52c" stroke-width="4"/>
<text x="518" y="210" font-family="Liberation Sans" font-size="13" letter-spacing="-0.1" fill="#000">EX1-POST_10YR:Standard</text>
<text transform="translate(883.5,179.8) scale(0.88,1)" x="0" y="0" font-family="Liberation Sans" font-weight="bold" font-size="34.8" letter-spacing="0.9" fill="#000">Outfall O1</text>
<text x="734" y="1021.5" font-family="Liberation Sans" font-weight="bold" font-size="18" letter-spacing="0.71" fill="#000">Elapsed Time (hours) [Starts @01/01/2007, 00:01]</text>
<text transform="translate(31.8,688) rotate(-90)" font-family="Liberation Sans" font-weight="bold" font-size="18.8" letter-spacing="0.2" fill="#000">Lateral Inflow (cfs)</text>
</svg>
<div class="dlgframe" style="left:748px;top:249px;width:425px;height:543px"></div>
<div class="abs" style="left:752px;top:256px;width:96px;height:16px;background:rgba(245,240,250,.45);filter:blur(2px);border-radius:6px"></div>
<div class="abs" style="left:756px;top:256.5px;font-size:12.2px;color:#101030;white-space:nowrap;transform:scaleX(0.95);transform-origin:0 0">Reference Graph</div>
<div class="abs" style="left:1119px;top:250px;width:47px;height:19px;border:1px solid #7b6b8e;border-top:none;border-radius:0 0 4px 4px;background:linear-gradient(#dcd0e8,#cbbddc)"></div>
<svg class="abs" style="left:1135px;top:253px" width="16" height="14"><path d="M4 3 L12 10.5 M12 3 L4 10.5" stroke="#5a5668" stroke-width="4" stroke-linecap="square"/><path d="M4 3 L12 10.5 M12 3 L4 10.5" stroke="#f4f4f8" stroke-width="2" stroke-linecap="square"/></svg>
<div class="abs" style="left:755px;top:278px;width:411px;height:507px;background:#f0f0f0;border:1px solid #5a5a6a"></div>
<div class="abs" style="left:762px;top:305px;width:395px;height:441px;background:#fff;border:1px solid #898c95"></div>
<div class="abs" style="left:945px;top:288px;width:104px;height:18px;border:1px solid #898c95;border-bottom:none;background:linear-gradient(#f2f2f2,#d8d8d8)"></div>
<div class="dtext" style="left:949px;top:291px">Other Data Sources</div>
<div class="abs" style="left:762px;top:286px;width:184px;height:21px;border:1px solid #898c95;border-bottom:none;background:#fff"></div>
<div class="dtext" style="left:769px;top:289px">"Lateral Inflow" Reference Sources</div>
<div class="abs" style="left:776px;top:324px;width:367px;height:42px;border:1px solid #d5dfe5;border-radius:3px"></div>
<div class="dtext" style="left:780px;top:319px;background:#fff;padding:0 3px">Main Element</div>
<div class="dtext" style="left:783px;top:343px">Divider</div>
<div class="abs" style="left:856px;top:337px;width:251px;height:22px;border:1px solid #abadb3;border-top-color:#8e8f8f;background:#fff"></div>
<div class="dtext" style="left:861px;top:341px">O1</div>
<div class="btn" style="left:1118px;top:338px;width:16px;height:21px;padding-top:3px">&lt;</div>
<div class="chk" style="left:784px;top:382px"></div>
<div class="dtext" style="left:799px;top:383px">Data from Other Output Source(s)</div>
<div class="chk" style="left:784px;top:411px"></div>
<div class="dtext" style="left:799px;top:412px">External Graph Data File</div>
<div class="chk" style="left:784px;top:473px"></div>
<div class="dtext" style="left:799px;top:474px">Calibration Data (if available)</div>
<div class="chk" style="left:784px;top:504px"></div>
<div class="dtext" style="left:799px;top:505px">SCADAWatch Data</div>
<svg class="abs" style="left:786px;top:384px" width="10" height="10"><path d="M1 5 L4 8 L9 1" stroke="#3a4a8a" stroke-width="1.8" fill="none"/></svg>
<div class="btn" style="left:1064px;top:377px;width:73px;height:21px;padding-top:3px">Select...</div>
<div class="btn dis" style="left:1064px;top:408px;width:73px;height:21px;padding-top:3px">Browse...</div>
<div class="abs" style="left:799px;top:438px;width:339px;height:23px;border:1px solid #abadb3;background:#fff"></div>
<div class="abs" style="left:985px;top:492px;width:150px;height:26px;background:linear-gradient(#f0f0f0,#e6e6e6);border-bottom:1px solid #d0d0d0"></div>
<div class="sep" style="left:1022px;top:494px;height:22px;background:#b8b8b8"></div>
<div class="sep" style="left:1105px;top:494px;height:22px;background:#b8b8b8"></div>
<svg class="abs" style="left:998px;top:497px" width="16" height="16"><circle cx="8" cy="8" r="6.5" fill="none" stroke="#9a9a9a" stroke-width="1.5"/><path d="M4 4 Q8 6 6 9 Q9 10 9 14 M10 3 Q11 6 13 6" stroke="#9a9a9a" stroke-width="1.5" fill="none"/></svg>
<svg class="abs" style="left:1030px;top:496px" width="18" height="16"><rect x="1" y="6" width="14" height="9" fill="#9a9a9a"/><path d="M2 10 H14 M6 10 V14 M10 10 V14" stroke="#e8e8e8"/><path d="M14 1 V7 M11 4 H17" stroke="#9a9a9a" stroke-width="1.6"/></svg>
<svg class="abs" style="left:1055px;top:496px" width="18" height="16"><rect x="1" y="6" width="14" height="9" fill="#9a9a9a"/><path d="M2 10 H14 M6 10 V14 M10 10 V14" stroke="#e8e8e8"/><path d="M11 1 L16 6 M16 1 L11 6" stroke="#9a9a9a" stroke-width="1.6"/></svg>
<svg class="abs" style="left:1080px;top:496px" width="18" height="16"><rect x="1" y="6" width="14" height="9" fill="#9a9a9a"/><path d="M2 10 H14 M6 10 V14 M10 10 V14" stroke="#e8e8e8"/><path d="M10 8 L16 2" stroke="#9a9a9a" stroke-width="2.4"/></svg>
<svg class="abs" style="left:1114px;top:497px" width="15" height="15"><rect x="0" y="0" width="15" height="15" fill="#9a9a9a"/><path d="M7.5 2 V9 M4.5 6 L7.5 9 L10.5 6 M3 12 H12" stroke="#eee" stroke-width="1.6" fill="none"/></svg>
<div class="btn" style="left:1100px;top:755px;width:58px;height:21px"></div>
<div class="dlgframe" style="left:766px;top:533px;width:385px;height:279px"></div>
<div class="abs" style="left:770px;top:540px;width:200px;height:16px;background:rgba(245,240,250,.4);filter:blur(2px);border-radius:6px"></div>
<div class="abs" style="left:774px;top:540.5px;font-size:12.2px;color:#101030;white-space:nowrap;transform:scaleX(0.98);transform-origin:0 0">Select Output Source(s) to Compare</div>
<div class="abs" style="left:1041px;top:534px;width:102px;height:19px;border:1px solid #7b6b8e;border-top:none;border-radius:0 0 4px 4px;background:linear-gradient(#dcd0e8,#cbbddc)"></div>
<div class="sep" style="left:1069px;top:534px;height:18px;background:#8a7a9e"></div>
<div class="sep" style="left:1096px;top:534px;height:18px;background:#8a7a9e"></div>
<svg class="abs" style="left:1048px;top:540px" width="14" height="9"><rect x="1.5" y="3.5" width="11" height="4" fill="#f8f8fa" stroke="#4a4656"/></svg>
<svg class="abs" style="left:1075px;top:537px" width="14" height="13"><rect x="1.5" y="1.5" width="11" height="10" fill="#f8f8fa" stroke="#4a4656"/><rect x="4.5" y="4.5" width="5" height="4" fill="#c8bcd8" stroke="#4a4656"/></svg>
<svg class="abs" style="left:1112px;top:536px" width="16" height="14"><path d="M4 3 L12 10.5 M12 3 L4 10.5" stroke="#5a5668" stroke-width="4" stroke-linecap="square"/><path d="M4 3 L12 10.5 M12 3 L4 10.5" stroke="#f4f4f8" stroke-width="2" stroke-linecap="square"/></svg>
<div class="abs" style="left:986px;top:542px;width:30px;height:8px;background:rgba(90,70,110,.35);filter:blur(2px)"></div>
<div class="abs" style="left:773px;top:562px;width:371px;height:243px;background:#f0f0f0;border:1px solid #5a5a6a"></div>
<div class="abs" style="left:786px;top:575px;width:346px;height:182px;border:1px solid #d5dfe5;border-radius:3px"></div>
<div class="dtext" style="left:791px;top:568px;background:#f0f0f0;padding:0 3px">Desired Selection</div>
<div class="abs" style="left:795px;top:587px;width:243px;height:158px;border:1px solid #828790;background:#fff"></div>
<div class="abs" style="left:797px;top:589px;width:239px;height:39px;background:#3399ff"></div>
<div class="dtext" style="left:799px;top:590px;color:#fff;font-size:10.6px">EX1-POST:Standard</div>
<div class="dtext" style="left:799px;top:603px;color:#fff;font-size:10.6px">EX1-POST_100YR:Standard</div>
<div class="dtext" style="left:799px;top:616px;color:#fff;font-size:10.6px">EX1-POST_10YR:Standard</div>
<div class="btn" style="left:1047px;top:592px;width:73px;height:21px;padding-top:3px">Select All</div>
<div class="btn" style="left:1047px;top:624px;width:73px;height:21px;padding-top:3px">Clear</div>
<div class="btn" style="left:1047px;top:657px;width:73px;height:21px;padding-top:3px">Reset</div>
<div class="btn dis" style="left:1047px;top:689px;width:73px;height:21px;padding-top:3px">Move Up</div>
<div class="btn dis" style="left:1047px;top:722px;width:73px;height:21px;padding-top:3px">Move Down</div>
<div class="btn" style="left:865px;top:770px;width:73px;height:21px;padding-top:3px;border-color:#3c7fb1;box-shadow:inset 0 0 0 1px #48d2fa">OK</div>
<div class="btn" style="left:979px;top:770px;width:73px;height:21px;padding-top:3px">Cancel</div>
</body></html>
